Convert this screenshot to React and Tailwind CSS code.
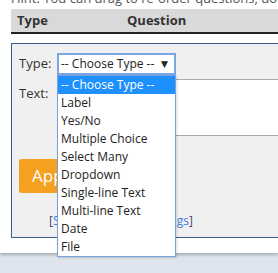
import React from "react";

const types = [
  "Label",
  "Yes/No",
  "Multiple Choice",
  "Select Many",
  "Dropdown",
  "Single-line Text",
  "Multi-line Text",
  "Date",
  "File",
];

export default function App() {
  return (
    <div
      className="w-[278px] h-[273px] overflow-hidden bg-[#dee4ed] text-[13px] text-[#333]"
      style={{ fontFamily: '"Open Sans", "DejaVu Sans", sans-serif' }}>
      <div className="flex flex-col bg-white h-[253px] shadow-[0_2px_3px_rgba(0,0,0,0.25)] pl-[11px]">
        {/* hint line, mostly scrolled off */}
        <div className="flex h-[9px] shrink-0 items-end overflow-hidden">
          <p className="mb-[2px] shrink-0 leading-[18px] text-[#555] whitespace-nowrap">
            Hint: You can drag to re-order questions, double-click to edit
          </p>
        </div>

        {/* table header */}
        <div className="flex h-[25px] shrink-0 items-center bg-[#d9d9d9] border-b-2 border-[#222] font-bold text-[#333]">
          <span className="w-[116px] pl-[6px]">Type</span>
          <span>Question</span>
        </div>

        {/* edit panel */}
        <div className="relative mt-[9px] h-[195px] shrink-0 border border-r-0 border-[#3f5d8c] bg-[#f0f0f0]">
          <div className="flex items-center pt-[9px]">
            <span className="w-[45px] pl-[7px]">Type:</span>
            <div className="flex w-[119px] h-[22px] items-center justify-between border-2 border-[#7aa5e6] bg-white pl-[2px] pr-[6px] text-[12px] text-[#222]">
              <span>-- Choose Type --</span>
              <span className="text-[9px] text-[#222]">▼</span>
            </div>
          </div>

          <div className="flex mt-[4px]">
            <span className="w-[45px] pl-[7px] pt-[5px]">Text:</span>
            <div className="flex-1 h-[57px] border border-r-0 border-[#aaa] bg-white"></div>
          </div>

          <button className="mt-[23px] ml-[7px] h-[34px] w-[80px] rounded-[3px] bg-[#f5a01e] text-left pl-[13px] text-[17px] text-white">
            Apply
          </button>

          <p className="mt-[19px] pl-[37px] whitespace-nowrap text-[12px] text-[#4a3a6e]">
            [<span className="text-[#3d7fd9]">Show Advanced Settings</span>]
          </p>

          {/* open select list */}
          <ul className="absolute left-[45px] top-[31px] w-[119px] border border-[#7aa0d8] bg-white text-[12px] text-[#222] shadow-[1px_1px_2px_rgba(0,0,0,0.15)]">
            <li className="h-[18px] leading-[18px] pl-[3px] bg-[#1e90ff] text-white">
              -- Choose Type --
            </li>
            {types.map((t) => (
              <li key={t} className="h-[18px] leading-[18px] pl-[3px] whitespace-nowrap">
                {t}
              </li>
            ))}
          </ul>
        </div>
      </div>
    </div>
  );
}
